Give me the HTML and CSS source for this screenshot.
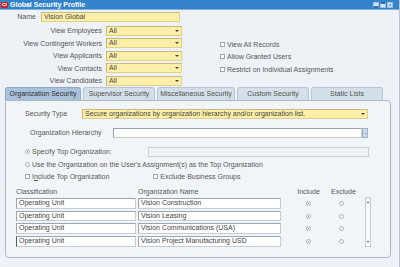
FILE: index.html
```html
<!DOCTYPE html>
<html lang="en">
<head>
    <meta charset="UTF-8">
    <title>Global Security Profile</title>
    <link rel="stylesheet" href="styles.css">
</head>
<body>
    <div class="window">
        <div class="titlebar">
            <span class="app-icon"><span></span></span>
            <span class="title">Global Security Profile</span>
            <span class="win-btns">
                <i class="min"></i><i class="max"></i><i class="close">&times;</i>
            </span>
        </div>

        <div class="name-row">
            <label>Name</label>
            <div class="field yellow name">Vision Global</div>
        </div>

        <div class="top">
            <div class="views">
                <label>View Employees</label><div class="field yellow select">All<b></b></div>
                <label>View Contingent Workers</label><div class="field yellow select">All<b></b></div>
                <label>View Applicants</label><div class="field yellow select">All<b></b></div>
                <label>View Contacts</label><div class="field yellow select">All<b></b></div>
                <label>View Candidates</label><div class="field yellow select">All<b></b></div>
            </div>
            <div class="flags">
                <div class="check"><span class="box"></span>View All Records</div>
                <div class="check"><span class="box"></span>Allow Granted Users</div>
                <div class="check"><span class="box"></span>Restrict on Individual Assignments</div>
            </div>
        </div>

        <div class="tabs">
            <div class="tab active">Organization Security</div>
            <div class="tab">Supervisor Security</div>
            <div class="tab">Miscellaneous Security</div>
            <div class="tab">Custom Security</div>
            <div class="tab">Static Lists</div>
        </div>

        <div class="panel">
            <div class="row sec-type">
                <label>Security Type</label>
                <div class="field yellow select wide">Secure organizations by organization hierarchy and/or organization list.<b></b></div>
            </div>
            <div class="row hierarchy">
                <label>Organization Hierarchy</label>
                <div class="field white hier"></div>
                <span class="lov">...</span>
            </div>
            <div class="row specify">
                <span class="radio on"></span>
                <span class="rlabel">Specify Top Organization:</span>
                <div class="field disabled topfield"></div>
            </div>
            <div class="row use">
                <span class="radio"></span>
                <span class="rlabel">Use the Organization on the User's Assignment(s) as the Top Organization</span>
            </div>
            <div class="row incl">
                <div class="check"><span class="box"></span>I<u>n</u>clude Top Organization</div>
                <div class="check excl"><span class="box"></span>Exclude Business Groups</div>
            </div>

            <div class="grid-wrap">
                <div class="org-grid">
                    <div class="hd c1">Classification</div>
                    <div class="hd c2">Organization Name</div>
                    <div class="hd c3">Include</div>
                    <div class="hd c4">Exclude</div>

                    <div class="field white cell c1">Operating Unit</div>
                    <div class="field white cell c2">Vision Construction</div>
                    <div class="c3"><span class="radio on"></span></div>
                    <div class="c4"><span class="radio"></span></div>

                    <div class="field white cell c1">Operating Unit</div>
                    <div class="field white cell c2">Vision Leasing</div>
                    <div class="c3"><span class="radio on"></span></div>
                    <div class="c4"><span class="radio"></span></div>

                    <div class="field white cell c1">Operating Unit</div>
                    <div class="field white cell c2">Vision Communications (USA)</div>
                    <div class="c3"><span class="radio on"></span></div>
                    <div class="c4"><span class="radio"></span></div>

                    <div class="field white cell c1 current">Operating Unit</div>
                    <div class="field white cell c2">Vision Project Manufacturing USD</div>
                    <div class="c3"><span class="radio on"></span></div>
                    <div class="c4"><span class="radio"></span></div>
                </div>
                <div class="scrollbar">
                    <span class="up"></span>
                    <span class="down"></span>
                </div>
            </div>
        </div>
    </div>
</body>
</html>
```

FILE: styles.css
```css
body {
    margin: 0;
    font-family: "Liberation Sans", Arial, sans-serif;
    font-size: 7px;
    color: #555;
    background: #eef2f6;
}
.window {
    width: 400px;
    height: 267px;
    background: #eef2f6;
    border-right: 1px solid #b8c4d0;
    box-sizing: border-box;
    overflow: hidden;
}

/* title bar */
.titlebar {
    height: 10px;
    background: #3383cb;
    border-bottom: 1px solid #7fb2e0;
    box-sizing: border-box;
    display: flex;
    align-items: center;
    color: white;
}
.app-icon {
    width: 7px;
    height: 6px;
    margin: 0 2px 0 1px;
    background: #d81e1e;
    border-radius: 1px;
    display: flex;
    align-items: center;
    justify-content: center;
}
.app-icon span {
    width: 5px;
    height: 3px;
    border: 1px solid white;
    border-radius: 2px;
    box-sizing: border-box;
}
.title {
    font-weight: bold;
    font-size: 7px;
}
.win-btns {
    margin-left: auto;
    margin-right: 6px;
    display: flex;
    gap: 1px;
}
.win-btns i {
    width: 6px;
    height: 6px;
    background: #d6e6f6;
    border: 1px solid #9cc0e4;
    box-sizing: border-box;
    font-style: normal;
    font-size: 6px;
    line-height: 4px;
    text-align: center;
    color: #2f6fb0;
}
.win-btns .min { border-bottom: 2px solid #2f6fb0; }
.win-btns .max { border-top: 2px solid #2f6fb0; }

/* fields */
.field {
    height: 10px;
    box-sizing: border-box;
    border: 1px solid #c4ccd6;
    border-top-color: #98a4b2;
    border-left-color: #98a4b2;
    padding-left: 2px;
    line-height: 8px;
    color: #444;
    white-space: nowrap;
    overflow: hidden;
    position: relative;
}
.yellow { background: #fdefa8; border-color: #e0d08a; border-top-color: #c9b97a; border-left-color: #c9b97a; }
.white { background: #ffffff; }
.disabled { background: #eef2f6; border-color: #c8d0da; }
.select b {
    position: absolute;
    right: 2px;
    top: 3px;
    border-left: 2px solid transparent;
    border-right: 2px solid transparent;
    border-top: 2px solid #444;
}

/* name and views */
.name-row {
    display: flex;
    align-items: center;
    margin-top: 1.5px;
}
.name-row label {
    width: 36px;
    text-align: right;
}
.name {
    margin-left: 5px;
    width: 139px;
}
.top {
    display: flex;
    margin-top: 4px;
}
.views {
    display: grid;
    grid-template-columns: 102px 76px;
    column-gap: 4px;
    row-gap: 2.6px;
    align-items: center;
}
.views label { text-align: right; }
.flags {
    margin-left: 38px;
    padding-top: 12.6px;
}
.flags .check { height: 12.6px; }
.check {
    display: flex;
    align-items: center;
    white-space: nowrap;
}
.box {
    width: 5px;
    height: 5px;
    border: 1px solid #9aa6b4;
    background: #fff;
    margin-right: 2px;
    box-sizing: border-box;
}
.check u { text-decoration: underline; }

/* tabs */
.tabs {
    display: flex;
    gap: 2px;
    margin: 1px 0 0 5px;
    height: 13px;
}
.tab {
    width: 72px;
    background: #d5dfea;
    border: 1px solid #b8c6d4;
    border-bottom: none;
    border-radius: 3px 3px 0 0;
    box-sizing: border-box;
    text-align: center;
    line-height: 12px;
    color: #505050;
}
.tab:nth-child(1) { width: 76px; }
.tab:nth-child(3) { width: 78px; }
.tab.active {
    background: #a9c1da;
    border-color: #8ea8c2;
    color: #303030;
}

/* panel */
.panel {
    margin-left: 5px;
    width: 386px;
    height: 158px;
    box-sizing: border-box;
    border: 1px solid #a9b8c8;
    border-radius: 0 4px 4px 4px;
    background: #f2f5f8;
}
.row {
    display: flex;
    align-items: center;
    height: 10px;
}
.sec-type { margin-top: 8px; }
.sec-type label { margin-left: 19px; width: 57px; }
.wide { width: 286px; }
.hierarchy { margin-top: 9px; }
.hierarchy label { margin-left: 24px; width: 83px; }
.hier { width: 249px; }
.lov {
    width: 6px;
    height: 10px;
    box-sizing: border-box;
    background: #c8d8ea;
    border: 1px solid #9fb4ca;
    font-size: 5px;
    line-height: 6px;
    text-align: center;
    color: #445;
    overflow: hidden;
}
.specify { margin-top: 9px; }
.radio {
    width: 5px;
    height: 5px;
    border: 1px solid #a4afbc;
    border-radius: 50%;
    background: #fff;
    box-sizing: border-box;
    display: inline-block;
    position: relative;
}
.radio.on::after {
    content: "";
    position: absolute;
    left: 1px;
    top: 1px;
    width: 1px;
    height: 1px;
    background: #666;
    border-radius: 50%;
}
.specify .radio, .use .radio { margin-left: 19px; margin-right: 2px; }
.rlabel { white-space: nowrap; }
.topfield { margin-left: 36px; width: 221px; }
.use { margin-top: 3px; }
.incl { margin-top: 2px; }
.incl .check { margin-left: 19px; }
.incl .excl { margin-left: 44px; }

/* organization grid */
.grid-wrap {
    display: flex;
    margin-top: 5px;
    margin-left: 10px;
}
.org-grid {
    display: grid;
    grid-template-columns: 120px 143px 41px 26px;
    column-gap: 2px;
    row-gap: 2.2px;
    grid-template-rows: 9px repeat(4, 10.5px);
    align-items: center;
}
.hd { color: #555; line-height: 9px; }
.org-grid .c3, .org-grid .c4 { text-align: center; }
.org-grid .c3 { padding-left: 10px; }
.org-grid .c4 { padding-left: 5px; }
.cell { height: 10.5px; line-height: 8.5px; }
.current { border-left: 1px solid #3c5a80; }
.scrollbar {
    margin-left: 13px;
    margin-top: 10px;
    width: 6px;
    height: 50px;
    box-sizing: border-box;
    border: 1px solid #c0ccd8;
    background: #f6f8fb;
    position: relative;
}
.scrollbar .up, .scrollbar .down {
    position: absolute;
    left: 1px;
    border-left: 1.5px solid transparent;
    border-right: 1.5px solid transparent;
}
.scrollbar .up { top: 3px; border-bottom: 2px solid #444; }
.scrollbar .down { bottom: 3px; border-top: 2px solid #444; }
```
